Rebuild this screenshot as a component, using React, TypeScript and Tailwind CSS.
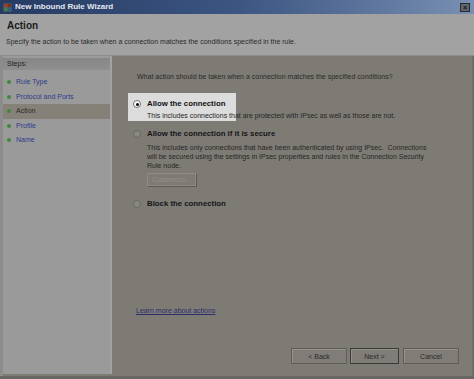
import React from 'react';

const steps = [
  { label: 'Rule Type', active: false },
  { label: 'Protocol and Ports', active: false },
  { label: 'Action', active: true },
  { label: 'Profile', active: false },
  { label: 'Name', active: false },
];

function Radio({ checked = false, lit = false }: { checked?: boolean; lit?: boolean }) {
  return (
    <span
      className={`flex h-[8px] w-[8px] shrink-0 items-center justify-center rounded-full border ${
        lit ? 'border-[#6d6d6d] bg-white' : 'border-[#6a6864] bg-[#8a8782]'
      }`}
    >
      {checked && <span className="h-[3px] w-[3px] rounded-full bg-black" />}
    </span>
  );
}

function WizButton({ label, className, strong = false }: { label: string; className: string; strong?: boolean }) {
  return (
    <button
      className={`${className} h-[16px] text-[7px] leading-none text-[#2a2a2a] bg-[#807d78] border ${
        strong ? 'border-[#3a3a3a]' : 'border-[#5f5d59]'
      } shadow-[inset_1px_1px_0_#95928c]`}
    >
      {label}
    </button>
  );
}

export default function App() {
  return (
    <div
      className="w-[474px] h-[379px] flex flex-col overflow-hidden bg-[#7e7b75] text-[#1e1e1e]"
      style={{ fontFamily: '"Liberation Sans", Arial, sans-serif' }}
    >
      {/* title bar */}
      <div className="h-[14px] shrink-0 flex items-center px-[3px] bg-gradient-to-r from-[#263b63] via-[#3c5582] to-[#7990b2]">
        <svg width="9" height="9" viewBox="0 0 9 9" className="shrink-0">
          <rect x="0.5" y="0.5" width="8" height="8" fill="#5a6a5a" />
          <rect x="1" y="1" width="3.5" height="3.5" fill="#a33c2e" />
          <rect x="4.5" y="1" width="3.5" height="3.5" fill="#7a2f26" />
          <rect x="1" y="4.5" width="3.5" height="3.5" fill="#3f7f3f" />
          <rect x="4.5" y="4.5" width="3.5" height="3.5" fill="#2f5f8a" />
        </svg>
        <span className="ml-[3px] text-[8px] font-bold text-[#e4e8ee] leading-none">New Inbound Rule Wizard</span>
        <span className="ml-auto mr-[1px] flex h-[9px] w-[10px] items-center justify-center border border-[#2a2a2a] bg-[#5e6670] text-[7px] font-bold leading-none text-[#111]">
          ×
        </span>
      </div>

      {/* header */}
      <div className="h-[42px] shrink-0 bg-[#a2a2a2] border-b border-[#8c8c8c] px-[7px] pt-[6px]">
        <div className="text-[10px] font-bold leading-[12px] text-[#1a1a1a]">Action</div>
        <div className="mt-[5px] -ml-[1px] text-[7px] leading-[9px] text-[#2a2a2a]">
          Specify the action to be taken when a connection matches the conditions specified in the rule.
        </div>
      </div>

      {/* body */}
      <div className="flex flex-1 min-h-0">
        <div className="w-[112px] shrink-0 flex border-l-[3px] border-[#8c8c8c] pb-[2px]">
          <div className="flex-1 bg-[#9a9a9a] pt-[2px] border-r-[2px] border-[#a2a2a2]">
            <div className="h-[12px] flex items-center pl-[4px] text-[7px] text-[#1e1e1e] bg-gradient-to-b from-[#878787] to-[#8f8f8f]">
              Steps:
            </div>
            <div className="pt-[5px]">
              {steps.map((s) => (
                <div
                  key={s.label}
                  className={`h-[14.5px] flex items-center pl-[4px] ${s.active ? 'bg-[#858179]' : ''}`}
                >
                  <span className="h-[4px] w-[4px] rounded-full bg-[#3f8a3a]" />
                  <span
                    className={`ml-[5px] text-[7px] ${s.active ? 'text-[#2a2a2a]' : 'text-[#2e3a8a]'}`}
                  >
                    {s.label}
                  </span>
                </div>
              ))}
            </div>
          </div>
        </div>

        <div className="flex-1 flex flex-col pl-[16px] pr-[13px] pt-[16px] pb-[12px] border-r-[2px] border-[#6f6d69]">
          <div className="ml-[9px] text-[7px] leading-[10px] text-[#2a2a2a]">
            What action should be taken when a connection matches the specified conditions?
          </div>

          <div className="mt-[11px] w-[108px] h-[28px] bg-[#dcdcdc] pl-[5px] pt-[6px]">
            <div className="h-[10px] flex items-center gap-[6px]">
              <Radio checked lit />
              <span className="text-[7.8px] font-bold whitespace-nowrap text-[#111]">Allow the connection</span>
            </div>
            <div className="mt-[2px] ml-[14px] text-[7px] leading-[10px] whitespace-nowrap text-[#262626]">
              This includes connections that are protected with IPsec as well as those are not.
            </div>
          </div>

          <div className="mt-[8px] ml-[5px] h-[10px] flex items-center gap-[6px]">
            <Radio />
            <span className="text-[7.8px] font-bold text-[#151515]">Allow the connection if it is secure</span>
          </div>
          <div className="mt-[4px] ml-[19px] w-[280px] text-[7px] leading-[9px] text-[#262626]">
            This includes only connections that have been authenticated by using IPsec.&nbsp; Connections will be
            secured using the settings in IPsec properties and rules in the Connection Security Rule node.
          </div>
          <button className="mt-[3px] ml-[19px] w-[49px] h-[13px] text-left pl-[4px] text-[7px] leading-none text-[#949089] bg-[#7e7b75] border border-[#8f8c86] shadow-[1px_1px_0_#5c5a56]">
            Customize...
          </button>

          <div className="mt-[13px] ml-[5px] h-[10px] flex items-center gap-[6px]">
            <Radio />
            <span className="text-[7.8px] font-bold text-[#151515]">Block the connection</span>
          </div>

          <a className="mt-[97px] ml-[8px] text-[7px] leading-[10px] text-[#2b2d6e] underline w-fit">
            Learn more about actions
          </a>

          <div className="mt-auto flex justify-end">
            <WizButton label="< Back" className="w-[56px]" />
            <WizButton label="Next >" className="ml-[3px] w-[49px]" strong />
            <WizButton label="Cancel" className="ml-[4px] w-[56px]" />
          </div>
        </div>
      </div>
      <div className="h-[3px] shrink-0 bg-[#6a6864]" />
    </div>
  );
}
